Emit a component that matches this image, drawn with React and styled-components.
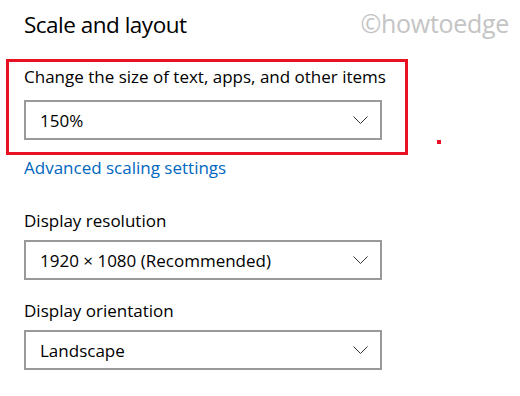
import React from 'react';
import styled, { createGlobalStyle } from 'styled-components';

const GlobalStyle = createGlobalStyle`
  html, body {
    margin: 0;
    background: #fff;
  }
  body {
    font-family: "Open Sans", "Noto Sans", sans-serif;
    color: #000;
  }
`;

const Chevron = () => (
  <svg width="15" height="8" viewBox="0 0 15 8">
    <polyline points="0.5,0.5 7.5,7.5 14.5,0.5" fill="none" stroke="#333" strokeWidth="1" />
  </svg>
);

const Dropdown = ({ value }) => (
  <Select>
    <Value>{value}</Value>
    <Chevron />
  </Select>
);

const App = () => {
  return (
    <Page>
      <GlobalStyle />
      <Header>
        <Title>Scale and layout</Title>
        <Watermark>©howtoedge</Watermark>
      </Header>
      <Highlight>
        <Label $gap={11}>Change the size of text, apps, and other items</Label>
        <Dropdown value="150%" />
      </Highlight>
      <Link>Advanced scaling settings</Link>
      <Section $top={29}>
        <Label>Display resolution</Label>
        <Dropdown value="1920 × 1080 (Recommended)" />
      </Section>
      <Section $top={19}>
        <Label>Display orientation</Label>
        <Dropdown value="Landscape" />
      </Section>
      <Dot />
    </Page>
  );
};

const Page = styled.div`
  position: relative;
  width: 520px;
  height: 396px;
  padding-left: 24px;
  box-sizing: border-box;
  overflow: hidden;
`;

const Header = styled.div`
  display: flex;
  justify-content: space-between;
  align-items: baseline;
  padding-right: 11px;
  padding-top: 6px;
`;

const Title = styled.h1`
  margin: 0;
  font-size: 22.5px;
  font-weight: 400;
  line-height: 34px;
  letter-spacing: -0.5px;
`;

const Watermark = styled.span`
  font-size: 25px;
  line-height: 34px;
  color: #c4c4c4;
  letter-spacing: -0.3px;
`;

const Highlight = styled.div`
  width: fit-content;
  margin: 17px 0 0 -18px;
  padding: 3px 19px 12px 15px;
  border: 3px solid #e81123;
`;

const Label = styled.div`
  font-size: 17px;
  line-height: 24px;
  margin-bottom: ${p => p.$gap ?? 7}px;
`;

const Select = styled.div`
  width: 358px;
  height: 40px;
  box-sizing: border-box;
  border: 2px solid #999;
  display: flex;
  align-items: center;
  justify-content: space-between;
  padding: 0 12px 0 14px;
`;

const Value = styled.span`
  font-size: 17px;
`;

const Link = styled.div`
  margin-top: 1px;
  font-size: 17px;
  line-height: 24px;
  color: #0067c0;
`;

const Section = styled.div`
  margin-top: ${p => p.$top}px;
`;

const Dot = styled.span`
  position: absolute;
  left: 437px;
  top: 140px;
  width: 4px;
  height: 4px;
  background: #e81123;
`;

export default App;
